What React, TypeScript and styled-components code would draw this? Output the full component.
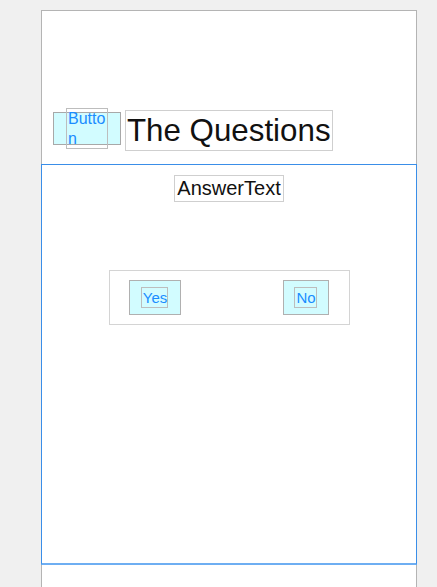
import React from "react";
import styled, { createGlobalStyle } from "styled-components";

const Global = createGlobalStyle`
  html, body {
    margin: 0;
    padding: 0;
    background: #f0f0f0;
    overflow: hidden;
  }
  body {
    font-family: "Liberation Sans", Arial, sans-serif;
  }
`;

const Page = styled.div`
  width: 437px;
  height: 587px;
  padding: 10px 0 0 41px;
  box-sizing: border-box;
  overflow: hidden;
`;

const Frame = styled.div`
  width: 376px;
  display: flex;
  flex-direction: column;
`;

const Header = styled.div`
  height: 154px;
  box-sizing: border-box;
  background: #fff;
  border: 1px solid #b4b4b4;
  border-bottom: none;
  display: flex;
  align-items: flex-start;
  padding: 99px 0 0 11px;
  gap: 4px;
`;

const ToolButton = styled.div`
  width: 68px;
  height: 33px;
  margin-top: 2px;
  box-sizing: border-box;
  border: 1px solid #a8a8a8;
  background: #d2fcff;
  display: flex;
  align-items: center;
  justify-content: center;
`;

const Label = styled.span<{ $size: number; $line: number; $width?: number }>`
  display: block;
  flex-shrink: 0;
  box-sizing: border-box;
  border: 1px solid #bdbdbd;
  color: #1a8cff;
  font-size: ${(p) => p.$size}px;
  line-height: ${(p) => p.$line}px;
  padding: 0 0 0 1px;
  ${(p) => (p.$width ? `width: ${p.$width}px;` : "")}
  word-break: break-all;
`;

const Title = styled.div`
  box-sizing: border-box;
  border: 1px solid #cfcfcf;
  color: #111;
  font-size: 31.3px;
  line-height: 39px;
  padding: 0 1px;
  white-space: nowrap;
`;

const Scene = styled.div`
  height: 401px;
  box-sizing: border-box;
  background: #fff;
  border: 1px solid #3a8ee8;
  border-bottom: 2px solid #6eaef2;
  display: flex;
  flex-direction: column;
  align-items: center;
  padding-top: 10px;
`;

const AnswerText = styled.div`
  box-sizing: border-box;
  border: 1px solid #cfcfcf;
  color: #111;
  font-size: 20px;
  line-height: 25px;
  padding: 0 2px;
`;

const Choices = styled.div`
  margin-top: 68px;
  width: 241px;
  height: 55px;
  box-sizing: border-box;
  border: 1px solid #d4d4d4;
  display: flex;
  justify-content: space-between;
  align-items: flex-start;
  padding: 9px 20px 9px 19px;
`;

const ChoiceButton = styled.div<{ $width: number }>`
  width: ${(p) => p.$width}px;
  height: 35px;
  box-sizing: border-box;
  border: 1px solid #b0b0b0;
  background: #d2fcff;
  display: flex;
  align-items: center;
  justify-content: center;
`;

const Footer = styled.div`
  height: 40px;
  background: #fff;
  border-left: 1px solid #b4b4b4;
  border-right: 1px solid #b4b4b4;
`;

export default function App() {
  return (
    <>
      <Global />
      <Page>
        <Frame>
          <Header>
            <ToolButton>
              <Label $size={16} $line={19.5} $width={42}>
                Button
              </Label>
            </ToolButton>
            <Title>The Questions</Title>
          </Header>
          <Scene>
            <AnswerText>AnswerText</AnswerText>
            <Choices>
              <ChoiceButton $width={52}>
                <Label $size={15} $line={19}>Yes</Label>
              </ChoiceButton>
              <ChoiceButton $width={46}>
                <Label $size={15} $line={19}>No</Label>
              </ChoiceButton>
            </Choices>
          </Scene>
          <Footer />
        </Frame>
      </Page>
    </>
  );
}
